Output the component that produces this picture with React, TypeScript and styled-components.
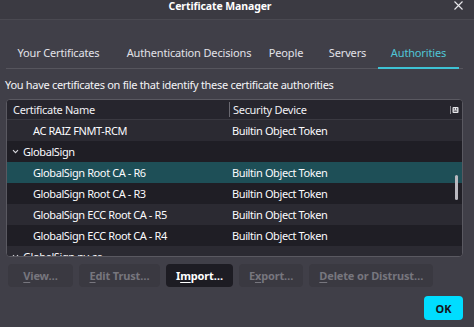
import React from "react";
import styled, { createGlobalStyle } from "styled-components";

const GlobalStyle = createGlobalStyle`
  html, body {
    margin: 0;
    padding: 0;
    background: #403f48;
  }
  body {
    font-family: "Noto Sans", "Open Sans", sans-serif;
    color: #fbfbfe;
    -webkit-font-smoothing: antialiased;
  }
  *, *::before, *::after {
    box-sizing: border-box;
  }
`;

const Dialog = styled.div`
  width: 474px;
  height: 327px;
  overflow: hidden;
  display: flex;
  flex-direction: column;
  background: #403f48;
`;

const TitleBar = styled.div`
  height: 20px;
  flex-shrink: 0;
  display: grid;
  grid-template-columns: 1fr auto 1fr;
  align-items: start;
  background: #3b3a42;
  border-bottom: 1px solid #4a4951;
`;

const Title = styled.div`
  grid-column: 2;
  margin-right: 34px;
  font-size: 10.5px;
  font-weight: 700;
  line-height: 12px;
  letter-spacing: -0.1px;
  color: #ffffff;
`;

const CloseButton = styled.div`
  grid-column: 3;
  justify-self: end;
  margin: 1px 11px 0 0;
  width: 9px;
  height: 9px;
  display: flex;
`;

const TabBar = styled.div`
  display: flex;
  flex-shrink: 0;
  margin: 18px 11px 0 6px;
  border-bottom: 1px solid #56555d;
`;

const Tab = styled.div<{ $active?: boolean; $width: number; $gap?: number }>`
  width: ${({ $width }) => $width}px;
  margin-left: ${({ $gap }) => $gap ?? 0}px;
  height: 31px;
  display: flex;
  align-items: center;
  justify-content: center;
  font-size: 11px;
  letter-spacing: -0.15px;
  white-space: nowrap;
  color: ${({ $active }) => ($active ? "#50c6d7" : "#e2e2e8")};
  border-bottom: 2px solid ${({ $active }) => ($active ? "#3ec2d4" : "transparent")};
  margin-bottom: -1px;
`;

const Description = styled.div`
  margin: 8px 0 0 5px;
  font-size: 11px;
  line-height: 16px;
  letter-spacing: -0.3px;
  color: #f4f4f7;
`;

const Tree = styled.div`
  position: relative;
  flex-shrink: 0;
  margin: 6px 11px 0 6px;
  height: 158px;
  border: 1px solid #5a5961;
  border-radius: 4px;
  overflow: hidden;
  background: #1f1e25;
`;

const HeaderRow = styled.div`
  display: grid;
  grid-template-columns: 222px 1fr 12px;
  height: 20px;
  align-items: center;
  background: #26252d;
  border-bottom: 1px solid #3a3941;
  font-size: 11px;
  letter-spacing: -0.3px;
  color: #f0f0f4;
`;

const HeaderCell = styled.div<{ $divider?: boolean }>`
  height: 15px;
  display: flex;
  align-items: center;
  padding-left: ${({ $divider }) => ($divider ? "3px" : "6px")};
  border-left: ${({ $divider }) => ($divider ? "1px solid #6a6971" : "none")};
`;

const ColumnPicker = styled.div`
  display: flex;
  align-items: center;
  height: 19px;
`;

const Row = styled.div<{ $tone: "light" | "dark" | "selected" }>`
  display: grid;
  grid-template-columns: 222px 1fr;
  height: 21px;
  align-items: center;
  font-size: 11px;
  letter-spacing: -0.4px;
  color: #fbfbfe;
  background: ${({ $tone }) =>
    $tone === "selected" ? "#1e4f57" : $tone === "light" ? "#2b2a32" : "#1f1e25"};
`;

const NameCell = styled.div<{ $level: number }>`
  display: flex;
  align-items: center;
  padding-left: ${({ $level }) => ($level === 0 ? 5 : 26)}px;
  white-space: nowrap;
`;

const Chevron = styled.span`
  display: flex;
  width: 10px;
  margin-right: 1px;
`;

const DeviceCell = styled.div`
  padding-left: 3px;
  white-space: nowrap;
`;

const ScrollThumb = styled.div`
  position: absolute;
  right: 4px;
  top: 75px;
  width: 3px;
  height: 25px;
  border-radius: 2px;
  background: #b9b8bf;
`;

const ButtonRow = styled.div`
  display: flex;
  gap: 6px;
  margin: 7px 0 0 8px;
`;

const Button = styled.div<{ $enabled?: boolean; $minWidth?: number }>`
  height: 23px;
  min-width: ${({ $minWidth }) => $minWidth ?? 0}px;
  padding: 0 10px;
  display: flex;
  align-items: center;
  justify-content: center;
  border-radius: 4px;
  font-size: 11px;
  font-weight: 700;
  letter-spacing: -0.15px;
  white-space: nowrap;
  background: ${({ $enabled }) => ($enabled ? "#1d1c23" : "#3a3941")};
  color: ${({ $enabled }) => ($enabled ? "#ffffff" : "#77767e")};
  u {
    text-underline-offset: 2px;
  }
`;

const Footer = styled.div`
  display: flex;
  justify-content: flex-end;
  margin: 9px 11px 0 0;
`;

const OkButton = styled.div`
  width: 39px;
  height: 24px;
  display: flex;
  align-items: center;
  justify-content: center;
  border-radius: 4px;
  background: #00ddff;
  color: #15141a;
  font-size: 11px;
  font-weight: 700;
`;

const tabs = [
  { label: "Your Certificates", width: 105 },
  { label: "Authentication Decisions", width: 156 },
  { label: "People", width: 38 },
  { label: "Servers", width: 61, gap: 12 },
  { label: "Authorities", width: 81, active: true },
];

type Cert = { name: string; device: string; level: number };

const rows: Cert[] = [
  { name: "AC RAIZ FNMT-RCM", device: "Builtin Object Token", level: 1 },
  { name: "GlobalSign", device: "", level: 0 },
  { name: "GlobalSign Root CA - R6", device: "Builtin Object Token", level: 1 },
  { name: "GlobalSign Root CA - R3", device: "Builtin Object Token", level: 1 },
  { name: "GlobalSign ECC Root CA - R5", device: "Builtin Object Token", level: 1 },
  { name: "GlobalSign ECC Root CA - R4", device: "Builtin Object Token", level: 1 },
  { name: "GlobalSign nv-sa", device: "", level: 0 },
];

const SELECTED = 2;

const App = () => {
  return (
    <Dialog>
      <GlobalStyle />
      <TitleBar>
        <Title>Certificate Manager</Title>
        <CloseButton>
          <svg width="9" height="9" viewBox="0 0 9 9">
            <path d="M0.5 0.5 L8.5 8.5 M8.5 0.5 L0.5 8.5" stroke="#e8e8ec" strokeWidth="1.1" />
          </svg>
        </CloseButton>
      </TitleBar>

      <TabBar>
        {tabs.map((t) => (
          <Tab key={t.label} $active={t.active} $width={t.width} $gap={t.gap}>
            {t.label}
          </Tab>
        ))}
      </TabBar>

      <Description>
        You have certificates on file that identify these certificate authorities
      </Description>

      <Tree>
        <HeaderRow>
          <HeaderCell>Certificate Name</HeaderCell>
          <HeaderCell $divider>Security Device</HeaderCell>
          <ColumnPicker>
            <svg width="9" height="10" viewBox="0 0 9 10">
              <path d="M0.5 1 V9" stroke="#8a8990" strokeWidth="1" />
              <rect x="2.5" y="2" width="6" height="6" rx="1" fill="#e6e6ea" />
              <rect x="3.7" y="3.3" width="1.2" height="1.2" fill="#26252d" />
              <rect x="6" y="3.3" width="1.2" height="1.2" fill="#26252d" />
              <rect x="3.7" y="5.6" width="3.5" height="1" fill="#26252d" />
            </svg>
          </ColumnPicker>
        </HeaderRow>
        {rows.map((r, i) => (
          <Row
            key={r.name}
            $tone={i === SELECTED ? "selected" : i % 2 === 0 ? "light" : "dark"}
          >
            <NameCell $level={r.level}>
              {r.level === 0 && (
                <Chevron>
                  <svg width="7" height="5" viewBox="0 0 7 5">
                    <path d="M1 1.2 L3.5 3.7 L6 1.2" stroke="#d8d8dd" strokeWidth="1.1" fill="none" />
                  </svg>
                </Chevron>
              )}
              {r.name}
            </NameCell>
            <DeviceCell>{r.device}</DeviceCell>
          </Row>
        ))}
        <ScrollThumb />
      </Tree>

      <ButtonRow>
        <Button $minWidth={65}>
          <span>
            <u>V</u>iew…
          </span>
        </Button>
        <Button $minWidth={81}>
          <span>
            <u>E</u>dit Trust…
          </span>
        </Button>
        <Button $enabled>
          <span>
            I<u>m</u>port…
          </span>
        </Button>
        <Button>
          <span>
            E<u>x</u>port…
          </span>
        </Button>
        <Button>
          <span>
            <u>D</u>elete or Distrust…
          </span>
        </Button>
      </ButtonRow>

      <Footer>
        <OkButton>OK</OkButton>
      </Footer>
    </Dialog>
  );
};

export default App;
